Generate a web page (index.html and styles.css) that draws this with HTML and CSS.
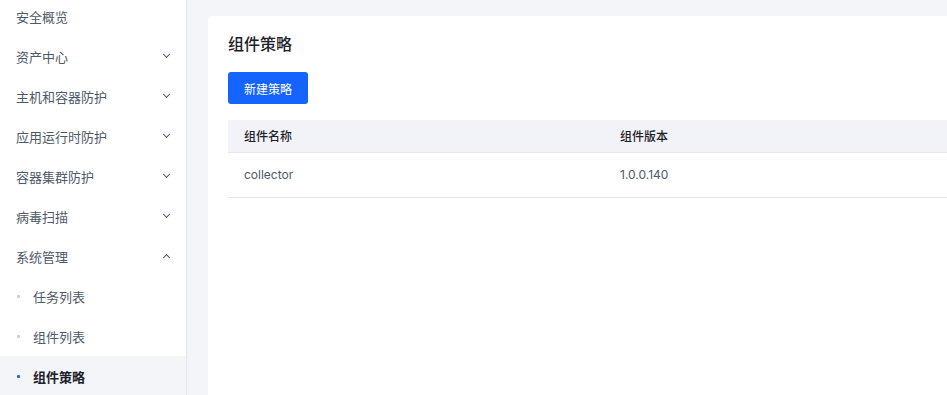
FILE: index.html
```html
<!DOCTYPE html>
<html lang="zh-CN">
<head>
    <meta charset="UTF-8">
    <meta name="viewport" content="width=device-width, initial-scale=1.0">
    <title>组件策略</title>
    <link rel="stylesheet" href="styles.css">
</head>
<body>
    <div class="layout">
        <aside class="sidebar">
            <ul class="menu">
                <li class="menu-item">安全概览</li>
                <li class="menu-item">资产中心<span class="arrow down"></span></li>
                <li class="menu-item">主机和容器防护<span class="arrow down"></span></li>
                <li class="menu-item">应用运行时防护<span class="arrow down"></span></li>
                <li class="menu-item">容器集群防护<span class="arrow down"></span></li>
                <li class="menu-item">病毒扫描<span class="arrow down"></span></li>
                <li class="menu-item">系统管理<span class="arrow up"></span></li>
                <li class="menu-item sub"><span class="dot"></span>任务列表</li>
                <li class="menu-item sub"><span class="dot"></span>组件列表</li>
                <li class="menu-item sub active"><span class="dot"></span>组件策略</li>
            </ul>
        </aside>
        <main class="main">
            <div class="card">
                <h2 class="card-title">组件策略</h2>
                <button class="btn-primary">新建策略</button>
                <table class="table">
                    <thead>
                        <tr>
                            <th class="col-name">组件名称</th>
                            <th>组件版本</th>
                        </tr>
                    </thead>
                    <tbody>
                        <tr>
                            <td>collector</td>
                            <td>1.0.0.140</td>
                        </tr>
                    </tbody>
                </table>
            </div>
        </main>
    </div>
</body>
</html>
```

FILE: styles.css
```css
* {
    box-sizing: border-box;
}
body {
    margin: 0;
    font-family: Inter, "Noto Sans CJK SC", sans-serif;
    color: #1d2129;
    background-color: #f4f5f9;
}
.layout {
    display: flex;
    height: 395px;
    overflow: hidden;
}
.sidebar {
    flex: 0 0 187px;
    background-color: #fff;
    border-right: 1px solid #e5e6eb;
    overflow: hidden;
}
.menu {
    list-style: none;
    margin: -4px 0 0;
    padding: 0;
}
.menu-item {
    display: flex;
    align-items: center;
    height: 40px;
    padding: 0 16px 0 16px;
    font-size: 13px;
    color: #4e5969;
}
.arrow {
    margin-left: auto;
    margin-right: 1px;
    width: 5px;
    height: 5px;
    border-right: 1.5px solid #4e5969;
    border-bottom: 1.5px solid #4e5969;
}
.arrow.down {
    transform: translateY(-2px) rotate(45deg);
}
.arrow.up {
    transform: translateY(1px) rotate(-135deg);
}
.menu-item.sub {
    padding-left: 17px;
}
.dot {
    width: 3px;
    height: 3px;
    margin-right: 13px;
    border-radius: 1px;
    background-color: #c9cdd4;
}
.menu-item.active {
    background-color: #f4f5f9;
    color: #1d2129;
    font-weight: 600;
}
.menu-item.active .dot {
    background-color: #1664ff;
}
.main {
    flex: 1;
    padding: 16px 0 0 21px;
}
.card {
    width: 800px;
    height: 400px;
    padding: 16px 20px;
    background-color: #fff;
    border-radius: 4px;
}
.card-title {
    margin: 0 0 16px;
    font-size: 16px;
    line-height: 24px;
    font-weight: 500;
}
.btn-primary {
    height: 32px;
    padding: 0 16px;
    border: none;
    border-radius: 3px;
    background-color: #1664ff;
    color: #fff;
    font-family: inherit;
    font-size: 12px;
}
.table {
    margin-top: 16px;
    width: 752px;
    border-collapse: collapse;
    font-size: 12px;
}
.table th {
    height: 32px;
    padding: 0 16px;
    text-align: left;
    font-weight: 500;
    background-color: #f2f3f8;
    border-bottom: 1px solid #e5e6eb;
}
.table .col-name {
    width: 376px;
}
.table td {
    height: 45px;
    padding: 0 16px;
    color: #4e5969;
    border-bottom: 1px solid #e5e6eb;
}
```
